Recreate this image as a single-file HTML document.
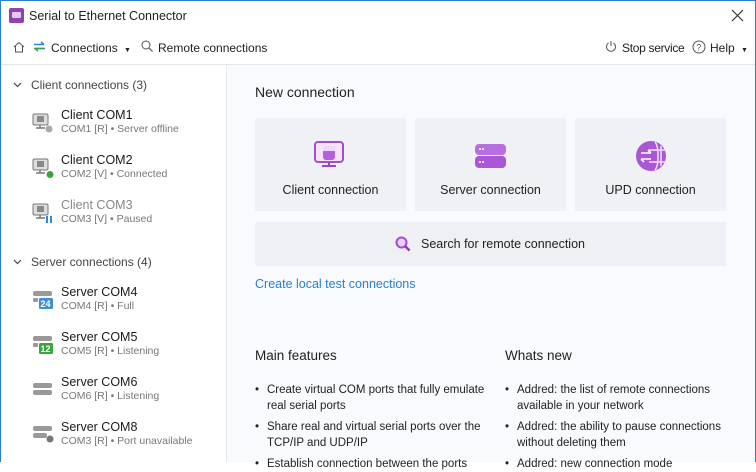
<!DOCTYPE html>
<html><head><style>
*{margin:0;padding:0;box-sizing:border-box}
body{width:756px;height:462px;overflow:hidden;font-family:"Liberation Sans",sans-serif;color:#222;background:#fff;position:relative;font-size:12px}
.frame{position:absolute;inset:0;border:1px solid #2b7fd3;border-bottom:none;pointer-events:none;z-index:9}
.abs{position:absolute;white-space:nowrap}
.side{position:absolute;left:1px;top:65px;width:226px;bottom:0;background:#fff;border-right:1px solid #e6e8ec}
.main{position:absolute;left:228px;top:65px;right:1px;bottom:0;background:#f8fafd}
.hdr{font-size:12px;color:#444}
.name{font-size:12.5px;color:#1a1a1a}
.sub{font-size:10.5px;color:#777}
.card{position:absolute;background:#f0f1f4;border-radius:2px;font-size:12.5px;color:#222;text-align:center}
ul{list-style:none}
li{position:absolute;font-size:11.5px;line-height:16px;color:#222;padding-left:12px}
li:before{content:"•";position:absolute;left:0}
.tb{font-size:12px;top:41px}
</style></head><body>
<div class="frame"></div>
<div class="abs" style="left:9px;top:8px;width:15px;height:15px;background:#8e44ad;border-radius:2px"><div style="position:absolute;left:3px;top:4px;width:9px;height:6px;background:#e7c7f3;border-radius:1px"></div></div>
<div class="abs" style="left:29px;top:9px;font-size:12.5px">Serial to Ethernet Connector</div>
<svg class="abs" style="left:731px;top:9px" width="13" height="13"><path d="M1 1L12 12M12 1L1 12" stroke="#333" stroke-width="1.2"/></svg>
<svg class="abs" style="left:13px;top:41px" width="12" height="12"><path d="M1 6L6 1.5 11 6M2.5 5v6h7V5" fill="none" stroke="#555"/></svg>
<svg class="abs" style="left:33px;top:41px" width="13" height="11"><path d="M1 3.5h10M8 1l3 2.5M12 7.5H2M5 10L2 7.5" fill="none" stroke="#2e86de" stroke-width="1.5"/><path d="M1 7.5h10" stroke="#3aa63a" stroke-width="1.5"/></svg>
<div class="abs tb" style="left:51px">Connections <span style="font-size:7px;margin-left:3px">▼</span></div>
<svg class="abs" style="left:141px;top:40px" width="12" height="12"><circle cx="5" cy="5" r="4" fill="none" stroke="#555"/><path d="M8 8l3.5 3.5" stroke="#555" stroke-width="1.2"/></svg>
<div class="abs tb" style="left:158px">Remote connections</div>
<svg class="abs" style="left:605px;top:40px" width="12" height="12"><path d="M3.5 3a4.5 4.5 0 1 0 5 0M6 1v5" fill="none" stroke="#555"/></svg>
<div class="abs tb" style="left:622px;letter-spacing:-0.3px">Stop service</div>
<svg class="abs" style="left:692px;top:40px" width="14" height="14"><circle cx="7" cy="7" r="6" fill="none" stroke="#555"/><text x="4.3" y="10.5" font-size="9" fill="#555" font-family="Liberation Sans">?</text></svg>
<div class="abs tb" style="left:710px">Help <span style="font-size:7px;margin-left:3px">▼</span></div>
<div class="abs" style="left:1px;top:64px;width:754px;height:1px;background:#e3e5e8"></div>
<div class="side">
<svg class="abs" style="left:12px;top:17px" width="9" height="6"><path d="M1 1l3.5 3.5L8 1" fill="none" stroke="#444" stroke-width="1.2"/></svg>
<div class="abs hdr" style="left:30px;top:13px">Client connections (3)</div>
<div class="abs name" style="left:60px;top:43px">Client COM1</div><div class="abs sub" style="left:60px;top:58px">COM1 [R] • Server offline</div>
<div class="abs name" style="left:60px;top:88px">Client COM2</div><div class="abs sub" style="left:60px;top:103px">COM2 [V] • Connected</div>
<div class="abs name" style="left:60px;top:133px;color:#888">Client COM3</div><div class="abs sub" style="left:60px;top:148px">COM3 [V] • Paused</div>
<svg class="abs" style="left:12px;top:194px" width="9" height="6"><path d="M1 1l3.5 3.5L8 1" fill="none" stroke="#444" stroke-width="1.2"/></svg>
<div class="abs hdr" style="left:30px;top:190px">Server connections (4)</div>
<div class="abs name" style="left:60px;top:220px">Server COM4</div><div class="abs sub" style="left:60px;top:235px">COM4 [R] • Full</div>
<div class="abs name" style="left:60px;top:265px">Server COM5</div><div class="abs sub" style="left:60px;top:280px">COM5 [R] • Listening</div>
<div class="abs name" style="left:60px;top:310px">Server COM6</div><div class="abs sub" style="left:60px;top:325px">COM6 [R] • Listening</div>
<div class="abs name" style="left:60px;top:355px">Server COM8</div><div class="abs sub" style="left:60px;top:370px">COM3 [R] • Port unavailable</div>
</div>
<svg class="abs" style="left:32px;top:112px" width="24" height="24"><rect x="1" y="2" width="15" height="11" rx="1.5" fill="#ddd" stroke="#777"/><rect x="5" y="4" width="7" height="6" fill="#888"/><path d="M8 13v3M4 16h9" stroke="#777" stroke-width="1.5"/><circle cx="17" cy="17" r="3.5" fill="#aaa"/></svg>
<svg class="abs" style="left:32px;top:157px" width="24" height="24"><rect x="1" y="2" width="15" height="11" rx="1.5" fill="#ddd" stroke="#777"/><rect x="5" y="4" width="7" height="6" fill="#888"/><path d="M8 13v3M4 16h9" stroke="#777" stroke-width="1.5"/><circle cx="18" cy="17.5" r="3.5" fill="#3aa63a"/></svg>
<svg class="abs" style="left:32px;top:202px" width="24" height="24"><rect x="1" y="2" width="15" height="11" rx="1.5" fill="#ddd" stroke="#777"/><rect x="5" y="4" width="7" height="6" fill="#888"/><path d="M8 13v3M4 16h9" stroke="#777" stroke-width="1.5"/><path d="M15 14v7M19 14v7" stroke="#2e86de" stroke-width="2"/></svg>
<svg class="abs" style="left:32px;top:289px" width="24" height="22"><rect x="1" y="2" width="19" height="5" rx="2" fill="#999"/><rect x="1" y="9" width="5" height="4" rx="1" fill="#999"/><rect x="7" y="9" width="14" height="11" rx="1.5" fill="#3b8ed8"/><text x="8.5" y="18" font-size="9" font-weight="bold" fill="#fff" font-family="Liberation Sans">24</text></svg>
<svg class="abs" style="left:32px;top:334px" width="24" height="22"><rect x="1" y="2" width="19" height="5" rx="2" fill="#999"/><rect x="1" y="9" width="5" height="4" rx="1" fill="#999"/><rect x="7" y="9" width="14" height="11" rx="1.5" fill="#3aa63a"/><text x="8.5" y="18" font-size="9" font-weight="bold" fill="#fff" font-family="Liberation Sans">12</text></svg>
<svg class="abs" style="left:32px;top:379px" width="24" height="22"><rect x="1" y="4" width="19" height="5" rx="2" fill="#999"/><rect x="1" y="11" width="19" height="5" rx="2" fill="#999"/></svg>
<svg class="abs" style="left:32px;top:424px" width="24" height="22"><rect x="1" y="2" width="19" height="5" rx="2" fill="#999"/><rect x="1" y="9" width="14" height="5" rx="2" fill="#999"/><circle cx="18" cy="15" r="3.5" fill="#777"/></svg>
<div class="main"></div>
<div class="abs" style="left:255px;top:84px;font-size:14px;color:#222">New connection</div>
<div class="card" style="left:255px;top:118px;width:151px;height:93px"><div style="position:absolute;top:65px;width:100%">Client connection</div></div>
<div class="card" style="left:415px;top:118px;width:151px;height:93px"><div style="position:absolute;top:65px;width:100%">Server connection</div></div>
<div class="card" style="left:575px;top:118px;width:151px;height:93px"><div style="position:absolute;top:65px;width:100%">UPD connection</div></div>
<svg class="abs" style="left:314px;top:140px" width="32" height="30"><rect x="1" y="2" width="28" height="20" rx="3" fill="#f3e4fa" stroke="#a34ed0" stroke-width="2"/><rect x="9" y="6" width="12" height="14" rx="3" fill="#b45fdc"/><rect x="9" y="6" width="12" height="5" fill="#eed8f8"/><path d="M15 22v3M8 26h14" stroke="#9b46c6" stroke-width="2"/></svg>
<svg class="abs" style="left:474px;top:143px" width="34" height="28"><rect x="1" y="1" width="31" height="11" rx="4" fill="#b86ee0"/><rect x="1" y="13" width="31" height="12" rx="4" fill="#a957d6"/><circle cx="6" cy="6" r="1" fill="#fff"/><circle cx="9" cy="6" r="1" fill="#fff"/><circle cx="6" cy="19" r="1" fill="#fff"/><circle cx="9" cy="19" r="1" fill="#fff"/></svg>
<svg class="abs" style="left:635px;top:140px" width="32" height="32"><circle cx="16" cy="16" r="15" fill="#a957d6"/><path d="M20 2c4 4 4 24 0 28M26 6v20M14 10h17M14 22h17" stroke="#f2e3fa" stroke-width="1.5" fill="none"/><path d="M6 13h10M13 10l3 3M16 19H6M9 22l-3-3" stroke="#fff" stroke-width="1.6" fill="none"/></svg>
<div class="card" style="left:255px;top:222px;width:471px;height:44px;background:#eef0f3"><div style="position:absolute;left:166px;top:15px">Search for remote connection</div></div>
<svg class="abs" style="left:395px;top:236px" width="16" height="16"><circle cx="6.5" cy="6.5" r="5" fill="#e8cdf5" stroke="#a34ed0" stroke-width="2"/><path d="M10 10l4.5 4.5" stroke="#8a3ab8" stroke-width="2.5"/></svg>
<div class="abs" style="left:255px;top:277px;font-size:12.5px;color:#2a7fd0">Create local test connections</div>
<div class="abs" style="left:255px;top:348px;font-size:13.5px">Main features</div>
<div class="abs" style="left:505px;top:348px;font-size:13.5px">Whats new</div>
<ul>
<li style="left:255px;top:382px;width:240px">Create virtual COM ports that fully emulate real serial ports</li>
<li style="left:255px;top:419px;width:240px">Share real and virtual serial ports over the TCP/IP and UDP/IP</li>
<li style="left:255px;top:456px;width:240px">Establish connection between the ports</li>
<li style="left:505px;top:382px;width:240px">Addred: the list of remote connections available in your network</li>
<li style="left:505px;top:419px;width:240px">Addred: the ability to pause connections without deleting them</li>
<li style="left:505px;top:456px;width:240px">Addred: new connection mode</li>
</ul>
</body></html>
